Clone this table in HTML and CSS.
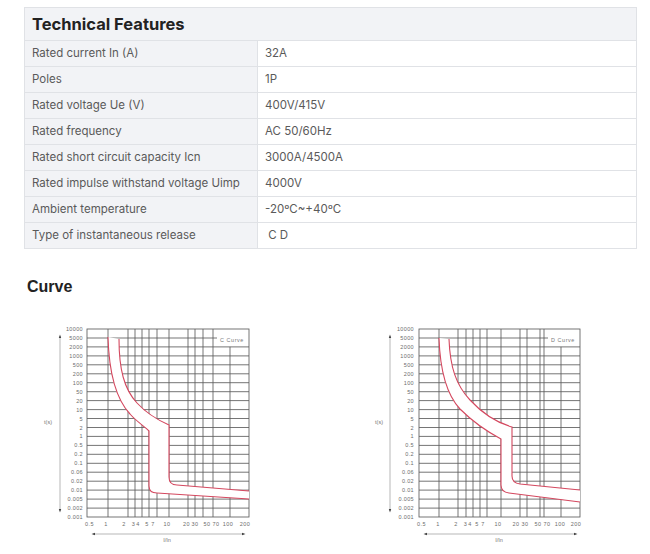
FILE: index.html
```html
<!DOCTYPE html>
<html lang="en">
<head>
<meta charset="utf-8">
<title>Technical Features</title>
<link rel="stylesheet" href="styles.css">
</head>
<body>
<main class="page">
  <section class="spec">
    <h2 class="spec-title">Technical Features</h2>
    <div class="spec-row"><div class="spec-key">Rated current In (A)</div><div class="spec-val">32A</div></div>
    <div class="spec-row"><div class="spec-key">Poles</div><div class="spec-val">1P</div></div>
    <div class="spec-row"><div class="spec-key">Rated voltage Ue (V)</div><div class="spec-val">400V/415V</div></div>
    <div class="spec-row"><div class="spec-key">Rated frequency</div><div class="spec-val">AC 50/60Hz</div></div>
    <div class="spec-row"><div class="spec-key">Rated short circuit capacity Icn</div><div class="spec-val">3000A/4500A</div></div>
    <div class="spec-row"><div class="spec-key">Rated impulse withstand voltage Uimp</div><div class="spec-val">4000V</div></div>
    <div class="spec-row"><div class="spec-key">Ambient temperature</div><div class="spec-val">-20ºC~+40ºC</div></div>
    <div class="spec-row"><div class="spec-key">Type of instantaneous release</div><div class="spec-val">&nbsp;C D</div></div>
  </section>

  <h2 class="curve-title">Curve</h2>

  <div class="charts">
    <svg class="chart" width="220" height="230" viewBox="0 0 220 230">
      <rect class="frame" x="47" y="10" width="162" height="188"/>
      <path class="grid" d="M47 19H177 M47 27.9H209 M47 36.9H209 M47 45.8H209 M47 54.8H209 M47 63.7H209 M47 72.7H209 M47 81.6H209 M47 90.6H209 M47 99.5H209 M47 108.5H209 M47 117.4H209 M47 126.4H209 M47 135.3H209 M47 144.3H209 M47 153.2H209 M47 162.2H209 M47 171.1H209 M47 180.1H209 M47 189.1H209 M68 10V198 M88 10V198 M95 10V198 M102 10V198 M109 10V198 M117 10V198 M129 10V198 M148 10V198 M155 10V198 M163 10V198 M173 10V198 M190 27.9V198"/>
      <text class="cv-name" x="180" y="23">C Curve</text>
      <path class="band" d="M68 18C69 55 76 80 90 95C96 102 104 107 109 112L109 167Q109 174 117 174L209 180L209 172L137 166Q129 166 129 158L129 106C120 102 108 96 97 84C84 70 79 50 79 20Z"/>
      <path class="curve" d="M68 18C69 55 76 80 90 95C96 102 104 107 109 112L109 167Q109 174 117 174L209 180"/>
      <path class="curve" d="M79 20C79 50 84 70 97 84C108 96 120 102 129 106L129 158Q129 166 137 166L209 172"/>
      <g class="ylab">
        <text x="43" y="12">10000</text><text x="43" y="21">5000</text><text x="43" y="29.9">2000</text><text x="43" y="38.9">1000</text>
        <text x="43" y="47.8">500</text><text x="43" y="56.8">200</text><text x="43" y="65.7">100</text><text x="43" y="74.7">50</text>
        <text x="43" y="83.6">20</text><text x="43" y="92.6">10</text><text x="43" y="101.5">5</text><text x="43" y="110.5">2</text>
        <text x="43" y="119.4">1</text><text x="43" y="128.4">0.5</text><text x="43" y="137.3">0.2</text><text x="43" y="146.3">0.1</text>
        <text x="43" y="155.2">0.06</text><text x="43" y="164.2">0.02</text><text x="43" y="173.1">0.01</text><text x="43" y="182.1">0.005</text>
        <text x="43" y="191.1">0.002</text><text x="43" y="200">0.001</text>
      </g>
      <g class="xlab">
        <text x="49.5" y="207">0.5</text><text x="66" y="207">1</text><text x="84" y="207">2</text><text x="93.5" y="207">3</text>
        <text x="98" y="207">4</text><text x="107" y="207">5</text><text x="113" y="207">7</text><text x="127" y="207">10</text>
        <text x="146.5" y="207">20</text><text x="155" y="207">30</text><text x="167" y="207">50</text><text x="176" y="207">70</text>
        <text x="188" y="207">100</text><text x="205" y="207">200</text>
      </g>
      <path class="axis" d="M20 17V192 M53 215H204"/>
      <path class="arrow" d="M18.8 19L20 15.5L21.2 19Z M18.8 190L20 193.5L21.2 190Z M55 213.8L51.5 215L55 216.2Z M202 213.8L205.5 215L202 216.2Z"/>
      <text class="axis-name" x="8" y="105">t(s)</text>
      <text class="axis-name" x="127" y="223">I/In</text>
    </svg>

    <svg class="chart" width="220" height="230" viewBox="0 0 220 230">
      <rect class="frame" x="47" y="10" width="161" height="188"/>
      <path class="grid" d="M47 19H176 M47 27.9H208 M47 36.9H208 M47 45.8H208 M47 54.8H208 M47 63.7H208 M47 72.7H208 M47 81.6H208 M47 90.6H208 M47 99.5H208 M47 108.5H208 M47 117.4H208 M47 126.4H208 M47 135.3H208 M47 144.3H208 M47 153.2H208 M47 162.2H208 M47 171.1H208 M47 180.1H208 M47 189.1H208 M67 10V198 M86 10V198 M94 10V198 M101 10V198 M108 10V198 M115 10V198 M129 10V198 M148 10V198 M155 10V198 M168 10V198 M172 10V198 M189 27.9V198"/>
      <text class="cv-name" x="179" y="23">D Curve</text>
      <path class="band" d="M67 19C68 50 74 75 88 90C100 102 114 112 129 120L129 166Q129 173 137 174L208 183L208 171L148 165Q140 164 140 157L140 108C126 104 110 94 98 81C84 66 78 48 77 20Z"/>
      <path class="curve" d="M67 19C68 50 74 75 88 90C100 102 114 112 129 120L129 166Q129 173 137 174L208 183"/>
      <path class="curve" d="M77 20C78 48 84 66 98 81C110 94 126 104 140 108L140 157Q140 164 148 165L208 171"/>
      <g class="ylab">
        <text x="42" y="12">10000</text><text x="42" y="21">5000</text><text x="42" y="29.9">2000</text><text x="42" y="38.9">1000</text>
        <text x="42" y="47.8">500</text><text x="42" y="56.8">200</text><text x="42" y="65.7">100</text><text x="42" y="74.7">50</text>
        <text x="42" y="83.6">20</text><text x="42" y="92.6">10</text><text x="42" y="101.5">5</text><text x="42" y="110.5">2</text>
        <text x="42" y="119.4">1</text><text x="42" y="128.4">0.5</text><text x="42" y="137.3">0.2</text><text x="42" y="146.3">0.1</text>
        <text x="42" y="155.2">0.06</text><text x="42" y="164.2">0.02</text><text x="42" y="173.1">0.01</text><text x="42" y="182.1">0.005</text>
        <text x="42" y="191.1">0.002</text><text x="42" y="200">0.001</text>
      </g>
      <g class="xlab">
        <text x="49.5" y="207">0.5</text><text x="66" y="207">1</text><text x="84" y="207">2</text><text x="93.5" y="207">3</text>
        <text x="98" y="207">4</text><text x="105" y="207">5</text><text x="111" y="207">7</text><text x="126" y="207">10</text>
        <text x="144" y="207">20</text><text x="153" y="207">30</text><text x="166" y="207">50</text><text x="175" y="207">70</text>
        <text x="188" y="207">100</text><text x="204" y="207">200</text>
      </g>
      <path class="axis" d="M18 17V192 M53 215H204"/>
      <path class="arrow" d="M16.8 19L18 15.5L19.2 19Z M16.8 190L18 193.5L19.2 190Z M55 213.8L51.5 215L55 216.2Z M202 213.8L205.5 215L202 216.2Z"/>
      <text class="axis-name" x="7" y="105">t(s)</text>
      <text class="axis-name" x="127" y="223">I/In</text>
    </svg>
  </div>
</main>
</body>
</html>
```

FILE: styles.css
```css
html, body {
  margin: 0;
  padding: 0;
  background: #ffffff;
}

body {
  font-family: Inter, "Noto Sans", "Liberation Sans", sans-serif;
  color: #5a5a5a;
}

.page {
  width: 650px;
}

/* ---------- spec table ---------- */
.spec {
  box-sizing: border-box;
  width: 613px;
  margin: 7px 0 0 24px;
  border: 1px solid #e0e2e6;
}

.spec-title {
  margin: 0;
  height: 32px;
  padding-left: 7px;
  background: #f2f3f6;
  color: #222222;
  font-size: 16.5px;
  font-weight: 700;
  line-height: 32px;
}

.spec-row {
  box-sizing: border-box;
  display: flex;
  height: 26px;
  border-top: 1px solid #e0e2e6;
  font-size: 11.5px;
  line-height: 25px;
}

.spec-key {
  box-sizing: border-box;
  flex: none;
  width: 233px;
  padding-left: 7px;
  background: #f2f3f6;
  border-right: 1px solid #e0e2e6;
}

.spec-val {
  flex: 1;
  padding-left: 7px;
}

/* ---------- curve section ---------- */
.curve-title {
  margin: 28px 0 0 27px;
  color: #222222;
  font-family: "Liberation Sans", Arial, sans-serif;
  font-size: 16px;
  font-weight: 700;
  line-height: 20px;
}

.charts {
  display: flex;
  gap: 112px;
  margin-top: 22px;
  padding-left: 40px;
}

.chart {
  display: block;
  flex: none;
  font-family: "Liberation Sans", Arial, sans-serif;
}

.chart .frame,
.chart .grid {
  fill: none;
  stroke: #5c5c5c;
  stroke-width: 0.85;
}

.chart .band {
  fill: #ffffff;
  stroke: none;
}

.chart .curve {
  fill: none;
  stroke: #d4485f;
  stroke-width: 1.1;
}

.chart .cv-name {
  fill: #777777;
  font-size: 5.4px;
  letter-spacing: 0.6px;
}

.chart .ylab text {
  fill: #6c6c6c;
  font-size: 5.5px;
  letter-spacing: 0.35px;
  text-anchor: end;
}

.chart .xlab text {
  fill: #6c6c6c;
  font-size: 5.5px;
  letter-spacing: 0.4px;
  text-anchor: middle;
}

.chart .axis {
  fill: none;
  stroke: #9a9a9a;
  stroke-width: 0.7;
}

.chart .arrow {
  fill: #444444;
}

.chart .axis-name {
  fill: #777777;
  font-size: 5.5px;
  text-anchor: middle;
}
```
